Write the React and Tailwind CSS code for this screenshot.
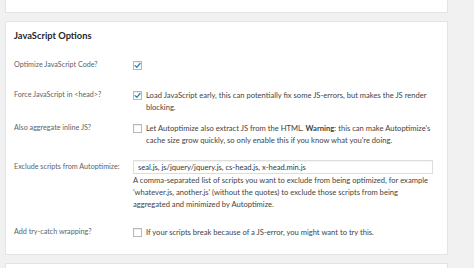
import React from "react";

const font = { fontFamily: 'Lato, "Open Sans", "Liberation Sans", sans-serif' };

function Box({ checked }) {
  return (
    <span className="mt-[2px] flex h-[9px] w-[9px] shrink-0 items-center justify-center border border-[#b4b9be] bg-white shadow-[inset_0_1px_1px_rgba(0,0,0,0.08)]">
      {checked && (
        <svg width="7" height="7" viewBox="0 0 10 10" className="block">
          <path d="M1.5 5.2 L4 7.6 L8.6 2.2" fill="none" stroke="#1e8cbe" strokeWidth="1.9" strokeLinecap="round" strokeLinejoin="round" />
        </svg>
      )}
    </span>
  );
}

function Label({ children }) {
  return <div className="w-[119px] shrink-0 text-[7.2px] text-[#5d646b]">{children}</div>;
}

export default function App() {
  return (
    <div style={font} className="h-[268px] w-[474px] overflow-hidden bg-[#f1f1f1] text-[7.6px] leading-[12px] text-[#444]">
      <div className="ml-[5px] h-[13px] w-[443px] border-x border-b border-[#e2e4e7] bg-white" />
      <div className="ml-[5px] mt-[8px] h-[234px] w-[443px] border border-[#e2e4e7] bg-white pl-[8px]">
        <div className="mt-[7px] text-[9.3px] font-bold leading-[14px] text-[#23282d]">JavaScript Options</div>

        <div className="mt-[16px] flex">
          <Label>Optimize JavaScript Code?</Label>
          <Box checked />
        </div>

        <div className="mt-[18px] flex">
          <Label>Force JavaScript in &lt;head&gt;?</Label>
          <Box checked />
          <div className="ml-[4px] w-[290px]">
            Load JavaScript early, this can potentially fix some JS-errors, but makes the JS render blocking.
          </div>
        </div>

        <div className="mt-[9px] flex">
          <Label>Also aggregate inline JS?</Label>
          <Box />
          <div className="ml-[4px] w-[290px]">
            Let Autoptimize also extract JS from the HTML. <span className="font-bold">Warning</span>: this can make Autoptimize's cache size grow quickly, so only enable this if you know what you're doing.
          </div>
        </div>

        <div className="mt-[14px] flex">
          <Label>
            <div className="pt-[1px]">Exclude scripts from Autoptimize:</div>
          </Label>
          <div className="w-[300px]">
            <div className="flex h-[14px] items-center border border-[#dddddd] bg-white pl-[4px] text-[#32373c] shadow-[inset_0_1px_1px_rgba(0,0,0,0.05)]">
              seal.js, js/jquery/jquery.js, cs-head.js, x-head.min.js
            </div>
            <div className="w-[302px]">
              A comma-separated list of scripts you want to exclude from being optimized, for example 'whatever.js, another.js' (without the quotes) to exclude those scripts from being aggregated and minimized by Autoptimize.
            </div>
          </div>
        </div>

        <div className="mt-[16px] flex">
          <Label>Add try-catch wrapping?</Label>
          <Box />
          <div className="ml-[4px]">If your scripts break because of a JS-error, you might want to try this.</div>
        </div>
      </div>
      <div className="ml-[5px] mt-[8px] h-[20px] w-[443px] border border-[#e2e4e7] bg-white" />
    </div>
  );
}
